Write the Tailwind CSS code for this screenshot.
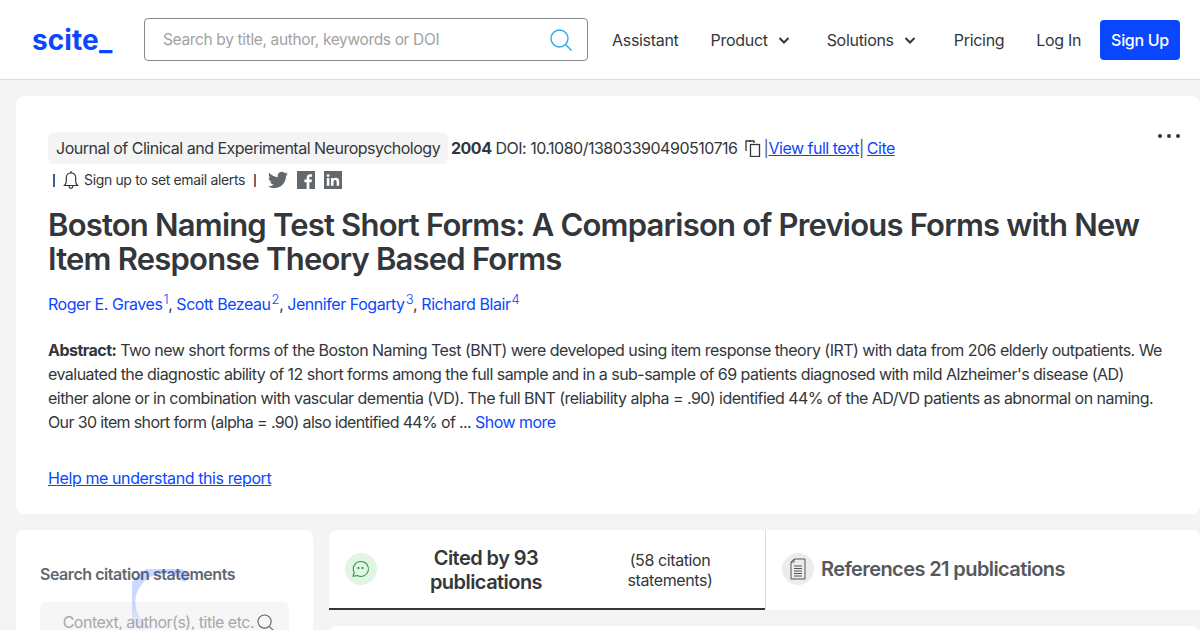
<!DOCTYPE html>
<html lang="en">
<head>
    <meta charset="UTF-8">
    <title>Boston Naming Test Short Forms - scite</title>
    <script src="https://cdn.jsdelivr.net/npm/@tailwindcss/browser@4"></script>
</head>
<body class="relative h-[630px] overflow-hidden bg-[#f4f4f4] font-['Inter',sans-serif] text-[#33373b]">

    <!-- Header -->
    <header class="flex h-20 items-center border-b border-[#dcdcdc] bg-white pl-8 pr-5">
        <div class="w-[112px] text-[28px] font-bold leading-none tracking-[0.1px] text-[#0a47ff]">scite_</div>
        <div class="flex h-[43px] w-[444px] items-center justify-between rounded border border-[#85888b] pl-[18px] pr-[14px]">
            <span class="text-[15.5px] tracking-[-0.35px] text-[#a2a2a2]">Search by title, author, keywords or DOI</span>
            <svg class="h-[24px] w-[24px]" viewBox="0 0 24 24" fill="none" stroke="#2aa8ee" stroke-width="1.4"><circle cx="10.5" cy="10.5" r="8.5"/><path d="M17 17l5.500 5.500"/></svg>
        </div>
        <nav class="ml-[24px] flex flex-1 items-center text-[16px] tracking-[-0.3px]">
            <span>Assistant</span>
            <span class="ml-[32px]">Product</span>
            <svg class="ml-[10px] h-3 w-3" viewBox="0 0 12 12" fill="none" stroke="#33373b" stroke-width="2"><path d="M1.500 4l4.500 4.500L10.500 4"/></svg>
            <span class="ml-[37px]">Solutions</span>
            <svg class="ml-[10px] h-3 w-3" viewBox="0 0 12 12" fill="none" stroke="#33373b" stroke-width="2"><path d="M1.500 4l4.500 4.500L10.500 4"/></svg>
            <span class="ml-[38px]">Pricing</span>
            <span class="ml-[32px]">Log In</span>
            <span class="ml-auto flex h-10 w-20 items-center justify-center rounded bg-[#0a47ff] font-medium text-white">Sign Up</span>
        </nav>
    </header>

    <!-- Report card -->
    <section class="relative ml-4 mt-4 h-[418px] rounded-lg bg-white px-8 pt-[36px]">
        <div class="absolute right-[20px] top-[38px] flex gap-[5px]">
            <span class="h-[4px] w-[4px] rounded-full bg-[#33373b]"></span>
            <span class="h-[4px] w-[4px] rounded-full bg-[#33373b]"></span>
            <span class="h-[4px] w-[4px] rounded-full bg-[#33373b]"></span>
        </div>

        <div class="flex h-8 items-center whitespace-nowrap text-[16px] tracking-[-0.5px]">
            <span class="flex h-8 w-[400px] items-center rounded-md bg-[#f4f4f4] pl-2">Journal of Clinical and Experimental Neuropsychology</span>
            <span class="ml-[3px] font-bold">2004</span>
            <span class="ml-[4px]">DOI: 10.1080/13803390490510716</span>
            <svg class="ml-[8px] h-[17px] w-[17px]" viewBox="0 0 17 17" fill="none" stroke="#33373b" stroke-width="1.3"><path d="M6 1H1v10"/><path d="M4 1h5v2"/><rect x="5.500" y="4.500" width="9" height="12"/></svg>
            <span class="ml-[1px] w-[5px] text-[#555]">|</span>
            <a class="text-[#0a47ff] underline">View full text</a>
            <span class="text-[#555]">|</span>
            <a class="ml-[3px] text-[#0a47ff] underline">Cite</a>
        </div>

        <div class="mt-[4px] flex h-6 items-center whitespace-nowrap pl-[5px] text-[14px] tracking-[-0.35px]">
            <span class="h-[13px] w-[2px] bg-[#33609a]"></span>
            <svg class="ml-[8px] h-[20px] w-[16px]" viewBox="0 0 16 20" fill="none" stroke="#33373b" stroke-width="1.2"><path d="M1.500 15.500c1.200-1 1.800-2.500 1.800-4.500V7.500a4.700 4.700 0 0 1 9.400 0V11c0 2 .6 3.500 1.800 4.500z"/><path d="M8 2.800V1"/><path d="M6.200 15.500v1a1.800 1.800 0 0 0 3.600 0v-1"/></svg>
            <span class="-mt-px ml-[5px]">Sign up to set email alerts</span>
            <span class="ml-[9px] h-[13px] w-[2px] bg-[#9a5a4a]"></span>
            <svg class="ml-[12px] h-[20px] w-[20px]" viewBox="0 0 24 24" fill="#62686c"><path d="M23.950 4.570a10 10 0 0 1-2.820.77 4.960 4.960 0 0 0 2.160-2.720c-.950.550-2 .950-3.130 1.180a4.920 4.920 0 0 0-8.380 4.480C7.690 8.090 4.070 6.130 1.640 3.160a4.820 4.820 0 0 0-.660 2.480c0 1.710.870 3.210 2.190 4.100a4.900 4.900 0 0 1-2.230-.620v.060a4.920 4.920 0 0 0 3.950 4.830 5 5 0 0 1-2.210.080 4.940 4.940 0 0 0 4.600 3.420A9.870 9.870 0 0 1 0 19.540a14 14 0 0 0 7.560 2.210c9.050 0 14-7.500 14-13.980 0-.210 0-.420-.020-.630a9.940 9.940 0 0 0 2.410-2.570z"/></svg>
            <svg class="ml-[9px] h-[18px] w-[18px]" viewBox="0 0 16 16"><rect width="16" height="16" fill="#62686c"/><path fill="#fff" d="M11 16v-6h2l.3-2.400H11V6.100c0-.700.200-1.100 1.200-1.100h1.200V2.900c-.2 0-1-.1-1.800-.1-1.800 0-3 1.100-3 3.100v1.700h-2V10h2v6z"/></svg>
            <svg class="ml-[9px] h-[18px] w-[18px]" viewBox="0 0 16 16"><rect width="16" height="16" fill="#62686c"/><path fill="#fff" d="M2.500 6.200h2.300V13H2.500zM3.600 2.800a1.300 1.300 0 1 1 0 2.600 1.300 1.300 0 0 1 0-2.600zM6.200 6.200h2.200v.9c.4-.6 1.100-1.100 2.200-1.100 2 0 2.900 1.200 2.900 3.300V13h-2.300V9.700c0-1-.3-1.700-1.200-1.700-.9 0-1.500.6-1.500 1.700V13H6.200z"/></svg>
        </div>

        <h1 class="mt-[16px] text-[31px] font-semibold leading-[34px] tracking-[-0.8px]">Boston Naming Test Short Forms: A Comparison of Previous Forms with New Item Response Theory Based Forms</h1>

        <div class="mt-[16px] flex h-6 items-center whitespace-nowrap text-[16px] tracking-[-0.45px] text-[#0a47ff]">
            <span>Roger E. Graves<sup class="ml-[1px] text-[13px] font-light">1</sup></span><span class="text-[#33373b]">,</span>
            <span class="ml-[4px]">Scott Bezeau<sup class="ml-[1px] text-[13px] font-light">2</sup></span><span class="text-[#33373b]">,</span>
            <span class="ml-[4px]">Jennifer Fogarty<sup class="ml-[1px] text-[13px] font-light">3</sup></span><span class="text-[#33373b]">,</span>
            <span class="ml-[4px]">Richard Blair<sup class="ml-[1px] text-[13px] font-light">4</sup></span>
        </div>

        <p class="mt-[22px] w-[1118px] text-[16px] leading-6 tracking-[-0.53px]"><b class="font-bold">Abstract:</b> Two new short forms of the Boston Naming Test (BNT) were developed using item response theory (IRT) with data from 206 elderly outpatients. We evaluated the diagnostic ability of 12 short forms among the full sample and in a sub-sample of 69 patients diagnosed with mild Alzheimer's disease (AD) either alone or in combination with vascular dementia (VD). The full BNT (reliability alpha = .90) identified 44% of the AD/VD patients as abnormal on naming. <span class="tracking-[-0.64px]">Our 30 item short form (alpha = .90) also identified 44% of ...</span> <span class="text-[#0a47ff]">Show more</span></p>

        <a class="mt-[32px] block text-[16px] leading-6 tracking-[-0.4px] text-[#0a47ff] underline">Help me understand this report</a>
    </section>

    <!-- Lower row -->
    <div class="ml-4 mt-4 flex h-[100px] gap-4 overflow-hidden">
        <aside class="w-[297px] shrink-0 rounded-t-lg bg-white px-6 pt-[34px]">
            <div class="text-[16px] font-semibold leading-5 tracking-[-0.45px] text-[#62686c]">Search citation statements</div>
            <div class="mt-[18px] flex h-10 items-center justify-end rounded-md bg-[#f6f6f6] pr-[15px]">
                <span class="text-[16px] tracking-[-0.5px] text-[#a8a8a8]">Context, author(s), title etc.</span>
                <svg class="ml-[3px] h-[17px] w-[17px]" viewBox="0 0 18 18" fill="none" stroke="#62686c" stroke-width="1.2"><circle cx="8" cy="8" r="7"/><path d="M13 13l4.500 4.500"/></svg>
            </div>
        </aside>

        <div class="flex-1">
            <div class="flex h-20">
                <div class="flex w-[436px] items-center rounded-tl-lg border-b-2 border-[#33373b] bg-white pl-4">
                    <span class="flex h-8 w-8 shrink-0 items-center justify-center rounded-full bg-[#e2f4e2]">
                        <svg class="h-5 w-5" viewBox="0 0 20 20" fill="none" stroke="#2f9a44" stroke-width="1.100"><path d="M10 2.500a7.500 7.500 0 1 1-3.600 14.100L2 17.200l1.300-3.500A7.500 7.500 0 0 1 10 2.500z"/><path d="M7.500 8v2M11.500 8v2" stroke-width="1.800"/></svg>
                    </span>
                    <span class="ml-[20px] w-[178px] pt-[2px] text-center text-[20px] font-semibold leading-6 tracking-[-0.55px]">Cited by 93 publications</span>
                    <span class="ml-[35px] w-[120px] pt-[2px] text-center text-[16px] leading-5 tracking-[-0.4px]">(58 citation statements)</span>
                </div>
                <div class="flex flex-1 items-center rounded-tr-lg border-b-2 border-l border-white border-l-[#dcdcdc] bg-white pl-4">
                    <span class="flex h-8 w-8 items-center justify-center rounded-full bg-[#ececec]">
                        <svg class="h-[22px] w-[18px]" viewBox="0 0 18 22" fill="none" stroke="#555" stroke-width="1"><path d="M5 1h11v20H2V4z"/><path d="M5 1v3H2"/><path d="M5 8h8M5 10.500h8M5 13h8M5 15.500h8M5 18h8"/></svg>
                    </span>
                    <span class="ml-[7px] text-[20px] font-semibold tracking-[-0.6px] text-[#55595c]">References 21 publications</span>
                </div>
            </div>
            <div class="mt-4 h-20 rounded-t-lg bg-white"></div>
        </div>
    </div>

    <!-- Loading spinner over the page -->
    <svg class="absolute left-[132px] top-[569px] h-[61px] w-[76px]" viewBox="0 0 76 61" fill="none">
        <defs>
            <linearGradient id="spin" gradientUnits="userSpaceOnUse" x1="0" y1="0" x2="0" y2="61">
                <stop offset="0" stop-color="#0a47ff" stop-opacity="0.22"/>
                <stop offset="0.55" stop-color="#0a47ff" stop-opacity="0.2"/>
                <stop offset="1" stop-color="#0a47ff" stop-opacity="0.04"/>
            </linearGradient>
        </defs>
        <path d="M55.500 10A33 33 0 1 0 14.300 61" stroke="url(#spin)" stroke-width="9"/>
    </svg>
</body>
</html>
